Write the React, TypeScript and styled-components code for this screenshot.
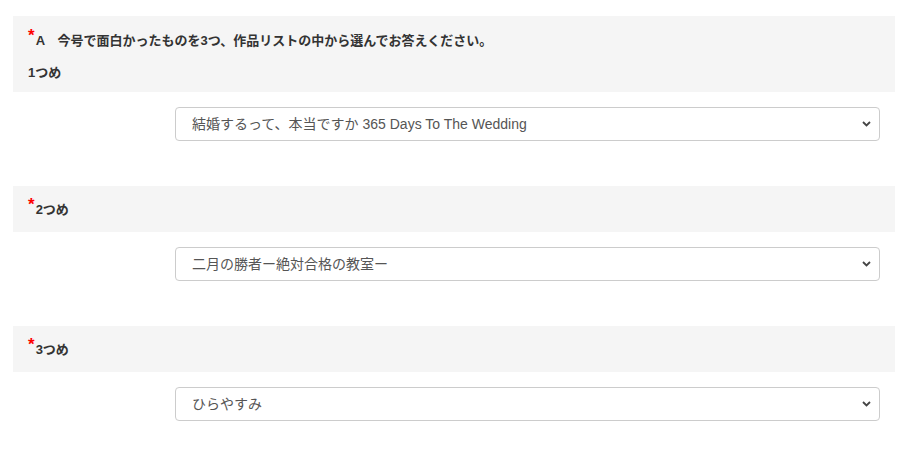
import React from "react";
import styled, { createGlobalStyle } from "styled-components";

const Global = createGlobalStyle`
  html, body { margin: 0; padding: 0; background: #fff; }
  body {
    font-family: "Liberation Sans", Arial, "Noto Sans CJK JP", sans-serif;
    color: #333;
  }
`;

const Page = styled.div`
  padding: 16px 25px 0 13px;
  display: flex;
  flex-direction: column;
`;

const Question = styled.section<{ $first?: boolean }>`
  display: flex;
  flex-direction: column;
  margin-bottom: 45px;
`;

const Header = styled.div<{ $tall?: boolean }>`
  background: #f5f5f5;
  padding: ${(p) => (p.$tall ? "13px 15px 8px" : "12px 15px 11px")};
  display: flex;
  flex-direction: column;
  gap: 10px;
`;

const Label = styled.div<{ $bold?: boolean }>`
  font-size: 13px;
  line-height: 22px;
  font-weight: ${(p) => (p.$bold ? 700 : 700)};
  color: #333;
  white-space: nowrap;
`;

const Star = styled.span`
  color: #ff0000;
  font-size: 17px;
  font-weight: 700;
  position: relative;
  top: -4px;
  margin-right: 1px;
`;

const Row = styled.div`
  padding: 15px 15px 0 162px;
`;

const SelectWrap = styled.div`
  position: relative;
`;

const Select = styled.select`
  appearance: none;
  -webkit-appearance: none;
  width: 100%;
  height: 34px;
  box-sizing: border-box;
  border: 1px solid #ccc;
  border-radius: 4px;
  background: #fff;
  padding: 0 30px 0 16px;
  font-family: "Liberation Sans", Arial, "Noto Sans CJK JP", sans-serif;
  font-size: 14px;
  color: #555;
  outline: none;
`;

const Chevron = styled.svg`
  position: absolute;
  right: 9px;
  top: 14px;
  width: 9px;
  height: 6px;
  pointer-events: none;
`;

const Dropdown = ({ value }: { value: string }) => (
  <SelectWrap>
    <Select defaultValue={value}>
      <option value={value}>{value}</option>
    </Select>
    <Chevron viewBox="0 0 9 6">
      <path d="M1 1 L4.5 4.5 L8 1" fill="none" stroke="#444" strokeWidth="1.8" />
    </Chevron>
  </SelectWrap>
);

export default function App() {
  return (
    <>
      <Global />
      <Page>
        <Question>
          <Header $tall>
            <Label>
              <Star>*</Star>A　今号で面白かったものを3つ、作品リストの中から選んでお答えください。
            </Label>
            <Label>1つめ</Label>
          </Header>
          <Row>
            <Dropdown value="結婚するって、本当ですか 365 Days To The Wedding" />
          </Row>
        </Question>
        <Question>
          <Header>
            <Label>
              <Star>*</Star>2つめ
            </Label>
          </Header>
          <Row>
            <Dropdown value="二月の勝者ー絶対合格の教室ー" />
          </Row>
        </Question>
        <Question>
          <Header>
            <Label>
              <Star>*</Star>3つめ
            </Label>
          </Header>
          <Row>
            <Dropdown value="ひらやすみ" />
          </Row>
        </Question>
      </Page>
    </>
  );
}
